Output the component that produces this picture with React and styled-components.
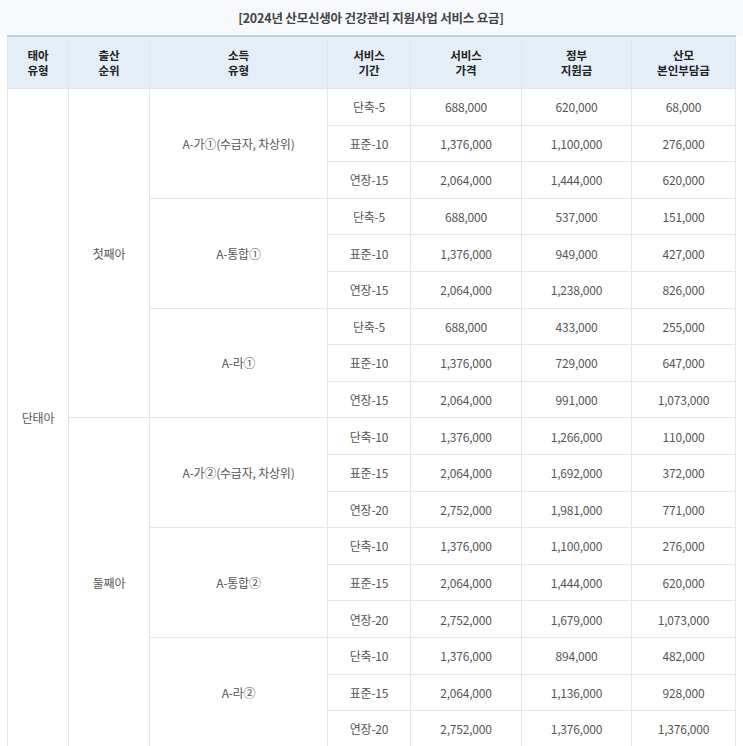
import React from "react";
import styled, { createGlobalStyle } from "styled-components";

const G = createGlobalStyle`
  body { margin: 0; background: #fff; font-family: "Noto Sans CJK KR", "Noto Sans", sans-serif; }
`;
const Wrap = styled.div`
  padding: 0 8px 0 7px;
  background: linear-gradient(#f7f9fc, #f7f9fc) top/100% 36px no-repeat, #fff;
`;
const Title = styled.div`
  height: 35px; display: flex; align-items: center; justify-content: center;
  font-size: 12.5px; font-weight: 700; color: #444; letter-spacing: -0.2px;
`;
const Table = styled.table`
  width: 728px; border-collapse: collapse; table-layout: fixed;
  border-top: 2px solid #b7d3ea;
`;
const Th = styled.th`
  background: #e4eef7; color: #222; font-size: 11.5px; font-weight: 700;
  height: 51px; line-height: 15px; border: 1px solid #dfe5ec; border-top: none; padding: 0;
`;
const Td = styled.td`
  height: 35.6px; border: 1px solid #e2e7ed; text-align: center;
  font-size: 12px; color: #555; padding: 0; letter-spacing: -0.2px;
`;

const groups = [
  { order: "첫째아", periods: ["단축-5","표준-10","연장-15"], prices: ["688,000","1,376,000","2,064,000"],
    types: [
      ["A-가①(수급자, 차상위)", ["620,000","1,100,000","1,444,000"], ["68,000","276,000","620,000"]],
      ["A-통합①", ["537,000","949,000","1,238,000"], ["151,000","427,000","826,000"]],
      ["A-라①", ["433,000","729,000","991,000"], ["255,000","647,000","1,073,000"]],
    ]},
  { order: "둘째아", periods: ["단축-10","표준-15","연장-20"], prices: ["1,376,000","2,064,000","2,752,000"],
    types: [
      ["A-가②(수급자, 차상위)", ["1,266,000","1,692,000","1,981,000"], ["110,000","372,000","771,000"]],
      ["A-통합②", ["1,100,000","1,444,000","1,679,000"], ["276,000","620,000","1,073,000"]],
      ["A-라②", ["894,000","1,136,000","1,376,000"], ["482,000","928,000","1,376,000"]],
    ]},
];

export default function App() {
  const rows = [];
  groups.forEach((g, gi) => g.types.forEach((t, ti) => [0,1,2].forEach(i => {
    rows.push(
      <tr key={`${gi}-${ti}-${i}`}>
        {gi === 0 && ti === 0 && i === 0 && <Td rowSpan={18}>단태아</Td>}
        {ti === 0 && i === 0 && <Td rowSpan={9}>{g.order}</Td>}
        {i === 0 && <Td rowSpan={3}>{t[0]}</Td>}
        <Td>{g.periods[i]}</Td>
        <Td>{g.prices[i]}</Td>
        <Td>{t[1][i]}</Td>
        <Td>{t[2][i]}</Td>
      </tr>
    );
  })));
  return (
    <Wrap>
      <G />
      <Title>[2024년 산모신생아 건강관리 지원사업 서비스 요금]</Title>
      <Table>
        <colgroup>
          <col style={{width:61}}/><col style={{width:81}}/><col style={{width:178}}/>
          <col style={{width:83}}/><col style={{width:111}}/><col style={{width:110}}/><col style={{width:104}}/>
        </colgroup>
        <thead>
          <tr>
            <Th>태아<br/>유형</Th><Th>출산<br/>순위</Th><Th>소득<br/>유형</Th>
            <Th>서비스<br/>기간</Th><Th>서비스<br/>가격</Th><Th>정부<br/>지원금</Th><Th>산모<br/>본인부담금</Th>
          </tr>
        </thead>
        <tbody>{rows}</tbody>
      </Table>
    </Wrap>
  );
}
